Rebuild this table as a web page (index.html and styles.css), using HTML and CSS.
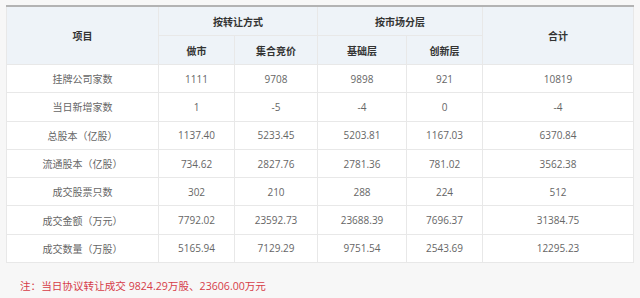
FILE: index.html
```html
<!DOCTYPE html>
<html lang="zh-CN">
<head>
    <meta charset="UTF-8">
    <meta name="viewport" content="width=device-width, initial-scale=1.0">
    <title>市场概况</title>
    <link rel="stylesheet" href="styles.css">
</head>
<body>
    <div class="wrap">
        <table class="stats">
            <colgroup>
                <col class="c-name">
                <col class="c-mm">
                <col class="c-bid">
                <col class="c-base">
                <col class="c-inno">
                <col class="c-total">
            </colgroup>
            <thead>
                <tr>
                    <th rowspan="2">项目</th>
                    <th colspan="2">按转让方式</th>
                    <th colspan="2">按市场分层</th>
                    <th rowspan="2">合计</th>
                </tr>
                <tr>
                    <th>做市</th>
                    <th>集合竞价</th>
                    <th>基础层</th>
                    <th>创新层</th>
                </tr>
            </thead>
            <tbody>
                <tr><td>挂牌公司家数</td><td>1111</td><td>9708</td><td>9898</td><td>921</td><td>10819</td></tr>
                <tr><td>当日新增家数</td><td>1</td><td>-5</td><td>-4</td><td>0</td><td>-4</td></tr>
                <tr><td>总股本（亿股）</td><td>1137.40</td><td>5233.45</td><td>5203.81</td><td>1167.03</td><td>6370.84</td></tr>
                <tr><td>流通股本（亿股）</td><td>734.62</td><td>2827.76</td><td>2781.36</td><td>781.02</td><td>3562.38</td></tr>
                <tr><td>成交股票只数</td><td>302</td><td>210</td><td>288</td><td>224</td><td>512</td></tr>
                <tr><td>成交金额（万元）</td><td>7792.02</td><td>23592.73</td><td>23688.39</td><td>7696.37</td><td>31384.75</td></tr>
                <tr><td>成交数量（万股）</td><td>5165.94</td><td>7129.29</td><td>9751.54</td><td>2543.69</td><td>12295.23</td></tr>
            </tbody>
        </table>
        <p class="note">注：当日协议转让成交 9824.29万股、23606.00万元</p>
    </div>
</body>
</html>
```

FILE: styles.css
```css
body {
    margin: 0;
    padding: 0;
    background: #f7f7f7;
    font-family: "Open Sans", "Noto Sans CJK SC", sans-serif;
}
.wrap {
    padding: 5px 7px 0 6px;
}
.stats {
    width: 627px;
    border-collapse: collapse;
    table-layout: fixed;
    background: #fff;
    border-top: 2px solid #b3b3b3;
}
.c-name { width: 152px; }
.c-mm { width: 76px; }
.c-bid { width: 83px; }
.c-base { width: 89px; }
.c-inno { width: 76px; }
.c-total { width: 151px; }
.stats th,
.stats td {
    border: 1px solid #e8e8e8;
    text-align: center;
    padding: 0;
    font-size: 10px;
}
.stats th {
    background: #eef3f8;
    color: #333;
    font-weight: bold;
    height: 28px;
}
.stats td {
    color: #666;
    height: 27.3px;
}
.note {
    margin: 15px 0 0 14px;
    color: #d63c48;
    font-size: 10.6px;
}
```
